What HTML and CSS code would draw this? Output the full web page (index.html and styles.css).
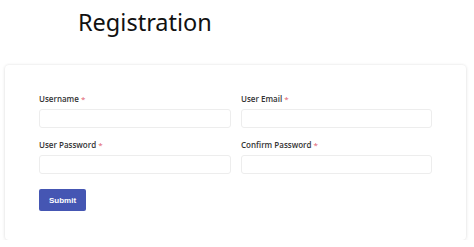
FILE: index.html
```html
<!DOCTYPE html>
<html>
<head>
<meta charset="utf-8">
<link rel="stylesheet" href="styles.css">
</head>
<body>
<h1 class="title">Registration</h1>
<form class="card">
  <div class="grid">
    <div class="field">
      <label class="label">Username <span class="req">*</span></label>
      <input class="input" type="text">
    </div>
    <div class="field">
      <label class="label">User Email <span class="req">*</span></label>
      <input class="input" type="text">
    </div>
    <div class="field">
      <label class="label">User Password <span class="req">*</span></label>
      <input class="input" type="password">
    </div>
    <div class="field">
      <label class="label">Confirm Password <span class="req">*</span></label>
      <input class="input" type="password">
    </div>
  </div>
  <button class="submit" type="button">Submit</button>
</form>
</body>
</html>
```
FILE: styles.css
```css
html, body {
  margin: 0;
  padding: 0;
  background: #ffffff;
}
body {
  font-family: "Open Sans", "Noto Sans", sans-serif;
  color: #222;
}
.title {
  margin: 0;
  padding: 6px 0 0 78px;
  height: 65px;
  box-sizing: border-box;
  font-family: "Noto Sans", "Open Sans", sans-serif;
  font-weight: 400;
  font-size: 23.5px;
  line-height: 32px;
  color: #111;
}
.card {
  margin: 0 8px 0 5px;
  width: 461px;
  box-sizing: border-box;
  height: 175px;
  padding: 29px 34px 0 34px;
  background: #fff;
  border-radius: 4px;
  box-shadow: 0 0 3px rgba(0,0,0,0.10), 0 1px 4px rgba(0,0,0,0.06);
}
.grid {
  display: grid;
  grid-template-columns: 192px 191px;
  column-gap: 10px;
  row-gap: 12px;
}
.field {
  display: flex;
  flex-direction: column;
}
.label {
  font-size: 8px;
  font-weight: 600;
  color: #333;
  line-height: 10px;
  height: 15px;
}
.req {
  color: #e05a6a;
  font-weight: 400;
}
.input {
  height: 19px;
  box-sizing: border-box;
  border: 1px solid #ededed;
  border-radius: 3px;
  background: #fff;
  margin: 0;
  padding: 0;
  outline: none;
}
.submit {
  margin-top: 15px;
  width: 47px;
  height: 22px;
  background: #4556b3;
  color: #fff;
  border: none;
  border-radius: 2px;
  font-family: "Liberation Sans", Arial, sans-serif;
  font-size: 8px;
  font-weight: 700;
  padding: 0;
}
```
